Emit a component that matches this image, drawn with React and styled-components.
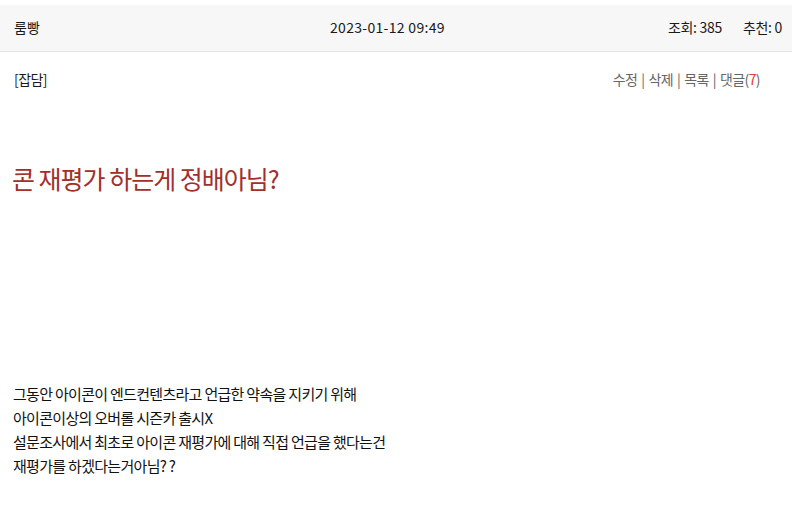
import React from "react";
import styled, { createGlobalStyle } from "styled-components";

const GlobalStyle = createGlobalStyle`
  body {
    margin: 0;
    background: #fff;
    font-family: "Noto Sans CJK KR", "Noto Sans", sans-serif;
    color: #222;
  }
`;

const Page = styled.div`
  width: 792px;
  padding-top: 5px;
`;

const InfoBar = styled.div`
  display: grid;
  grid-template-columns: 316px auto 1fr;
  align-items: center;
  height: 43px;
  padding: 0 10px 3px 14px;
  background: #f7f7f7;
  border-bottom: 1px solid #e3e3e3;
  font-size: 14px;
  color: #1a1a1a;
`;

const DateText = styled.span`
  letter-spacing: 0.3px;
`;

const Stats = styled.div`
  display: flex;
  justify-content: flex-end;
  gap: 21px;
  letter-spacing: -0.3px;
`;

const ActionRow = styled.div`
  display: flex;
  justify-content: space-between;
  align-items: center;
  padding: 17px 32px 0 14px;
  font-size: 14px;
  letter-spacing: -0.6px;
`;

const Category = styled.span`
  color: #1a1a1a;
`;

const Links = styled.div`
  color: #666;
  display: flex;
  gap: 4px;
`;

const Count = styled.span`
  color: #e53935;
`;

const Title = styled.h1`
  margin: 71px 0 0 12px;
  font-size: 25px;
  font-weight: 400;
  color: #a1302b;
  letter-spacing: -1px;
`;

const Body = styled.div`
  margin: 186px 0 0 13px;
  font-size: 15px;
  line-height: 24px;
  color: #111;
  letter-spacing: -0.7px;
`;

export default function App() {
  return (
    <>
      <GlobalStyle />
      <Page>
        <InfoBar>
          <span>룸빵</span>
          <DateText>2023-01-12 09:49</DateText>
          <Stats>
            <span>조회: 385</span>
            <span>추천: 0</span>
          </Stats>
        </InfoBar>
        <ActionRow>
          <Category>[잡담]</Category>
          <Links>
            <span>수정</span>|<span>삭제</span>|<span>목록</span>|
            <span>
              댓글(<Count>7</Count>)
            </span>
          </Links>
        </ActionRow>
        <Title>콘 재평가 하는게 정배아님?</Title>
        <Body>
          그동안 아이콘이 엔드컨텐츠라고 언급한 약속을 지키기 위해
          <br />
          아이콘이상의 오버롤 시즌카 출시X
          <br />
          설문조사에서 최초로 아이콘 재평가에 대해 직접 언급을 했다는건
          <br />
          재평가를 하겠다는거아님? ?
        </Body>
      </Page>
    </>
  );
}
